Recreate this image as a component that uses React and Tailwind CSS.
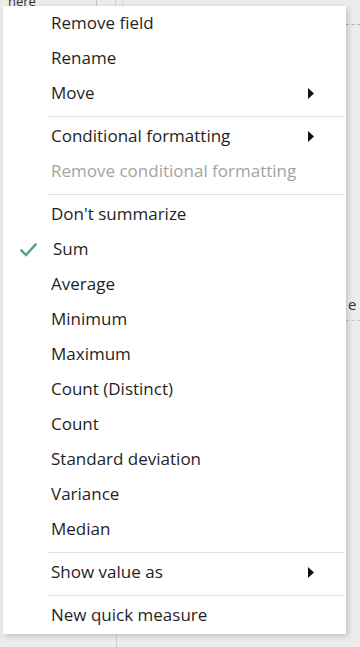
import React from 'react';

const groups = [
  [
    { label: 'Remove field' },
    { label: 'Rename' },
    { label: 'Move', sub: true },
  ],
  [
    { label: 'Conditional formatting', sub: true },
    { label: 'Remove conditional formatting', disabled: true },
  ],
  [
    { label: "Don't summarize" },
    { label: 'Sum', checked: true },
    { label: 'Average' },
    { label: 'Minimum' },
    { label: 'Maximum' },
    { label: 'Count (Distinct)' },
    { label: 'Count' },
    { label: 'Standard deviation' },
    { label: 'Variance' },
    { label: 'Median' },
  ],
  [{ label: 'Show value as', sub: true }],
  [{ label: 'New quick measure' }],
];

function Check() {
  return (
    <svg width="17" height="14" viewBox="0 0 17 14" fill="none">
      <path d="M1.5 7.5 L6 12 L15.5 1.5" stroke="#5a9a8b" strokeWidth="2.4" strokeLinecap="square" />
    </svg>
  );
}

function Arrow() {
  return (
    <svg width="6" height="11" viewBox="0 0 6 11">
      <path d="M0 0 L6 5.5 L0 11 Z" fill="#111" />
    </svg>
  );
}

function Item({ item }) {
  return (
    <div className="flex h-[35px] items-center">
      <div className="flex w-[48px] shrink-0 items-center justify-center pl-[2px]">
        {item.checked && <Check />}
      </div>
      <span
        className={`flex-1 pb-[2px] text-[17px] leading-none ${
          item.disabled ? 'text-[#a3a3a3]' : 'text-[#1f1f1f]'
        } ${item.checked ? 'pl-[2px]' : ''}`}
      >
        {item.label}
      </span>
      <div className="flex w-[40px] shrink-0 items-center pl-[2px]">{item.sub && <Arrow />}</div>
    </div>
  );
}

export default function App() {
  return (
    <div
      className="relative h-[647px] w-[360px] overflow-hidden bg-[#ececec]"
      style={{ fontFamily: '"Open Sans", "Noto Sans", sans-serif' }}
    >
      {/* underlying UI */}
      <div className="flex h-[6px] items-end">
        <div className="ml-[8px] h-[6px] w-[36px] overflow-hidden text-[13px] leading-[2px] text-[#333]">here</div>
        <div className="ml-[52px] h-full w-px bg-[#c8c8c8]" />
        <div className="ml-[18px] h-full w-px bg-[#d0d0d0]" />
        <div className="ml-[6px] h-full w-px bg-[#d8d8d8]" />
      </div>
      <div className="absolute left-[346px] top-[24px] w-[14px] border-t border-dashed border-[#b5b5b5]" />
      <div className="absolute left-[348px] top-[293px] text-[15px] text-[#333]">e</div>
      <div className="absolute left-[346px] top-[320px] w-[14px] border-t border-dashed border-[#c5c5c5]" />
      <div className="absolute left-[116px] top-[634px] h-[13px] w-px bg-[#cfcfcf]" />

      {/* context menu */}
      <div className="absolute left-[3px] top-[6px] w-[343px] bg-white pb-[1px] shadow-[2px_2px_6px_rgba(0,0,0,0.18)]">
        {groups.map((g, gi) => (
          <div key={gi}>
            {gi > 0 && (
              <div className="pb-[2px] pt-[5px]">
                <div className="ml-[45px] mr-[2px] h-px bg-[#e1e1e1]" />
              </div>
            )}
            {g.map((item) => (
              <Item key={item.label} item={item} />
            ))}
          </div>
        ))}
      </div>
    </div>
  );
}
